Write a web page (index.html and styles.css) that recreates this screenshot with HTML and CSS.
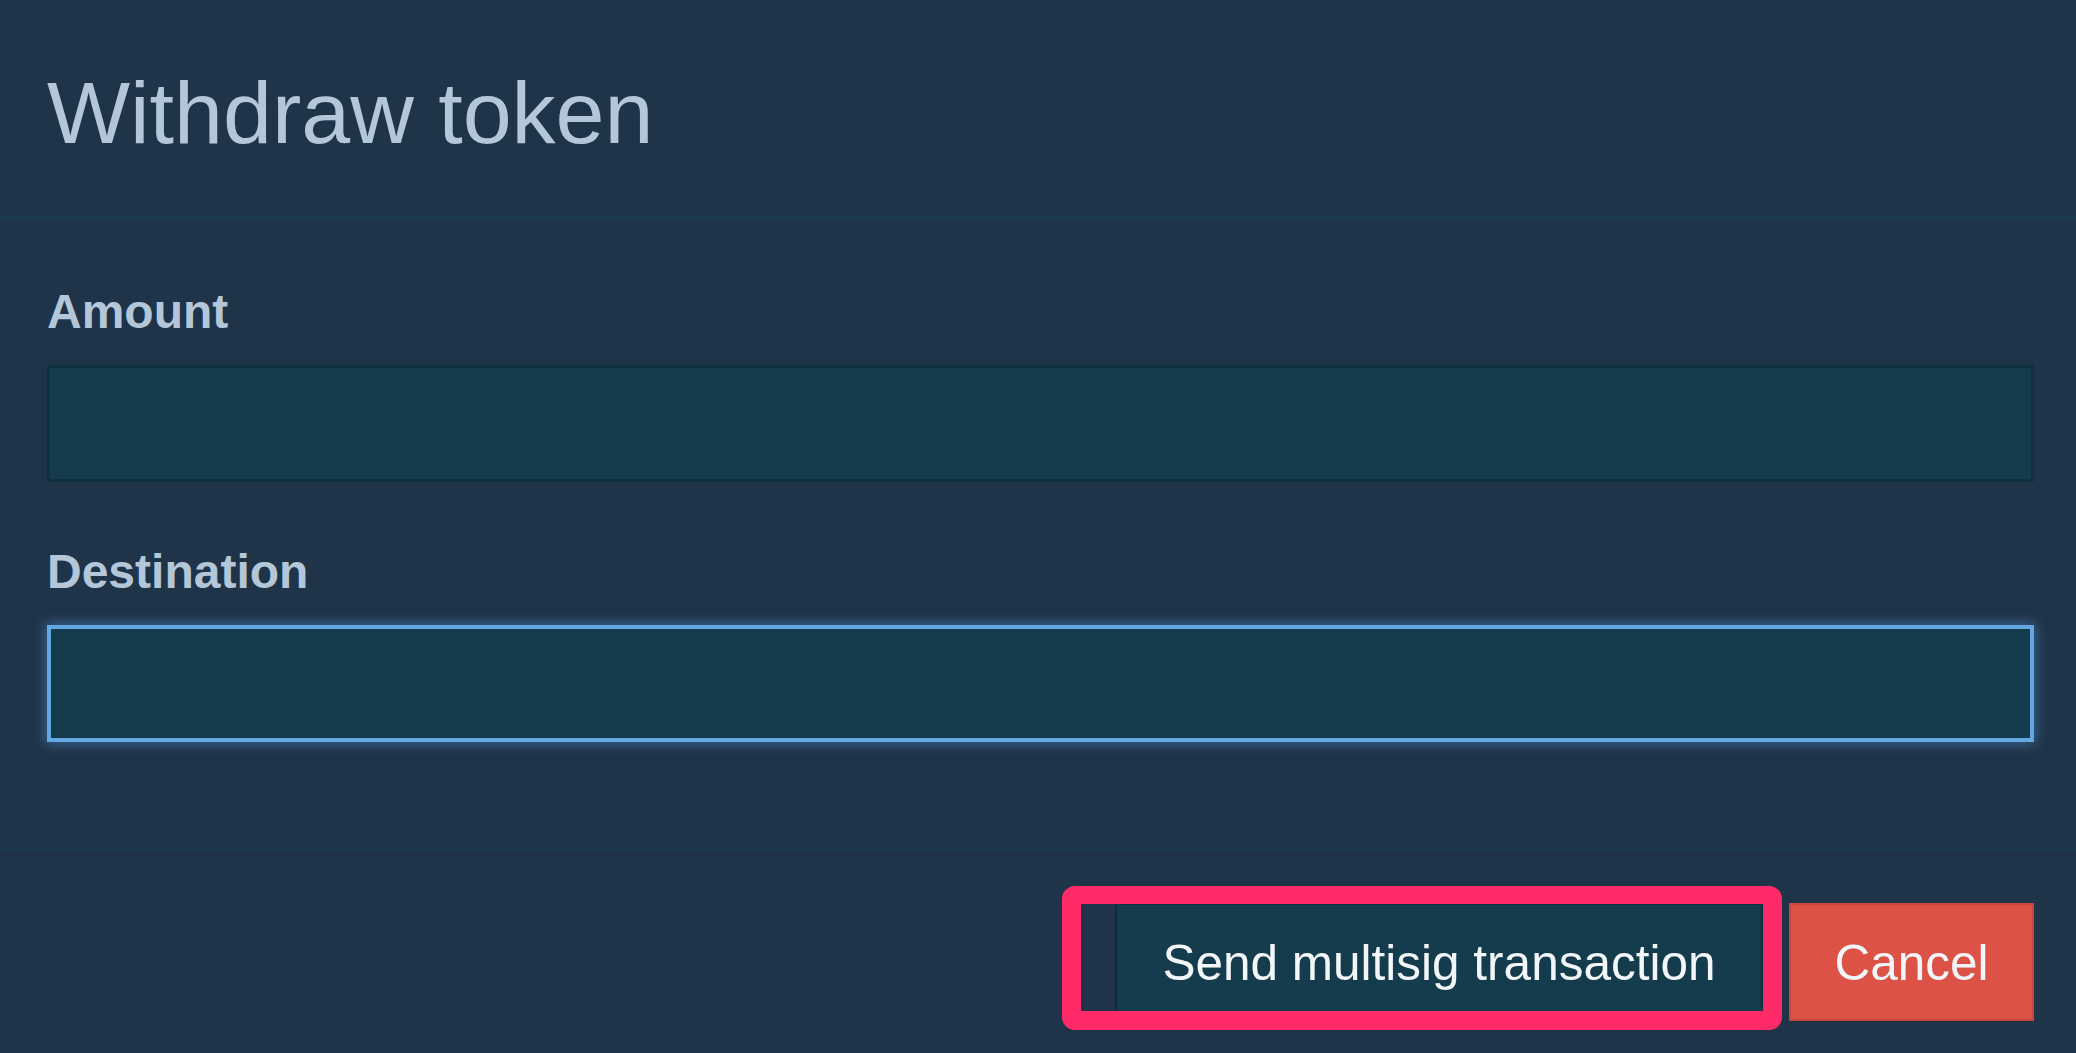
FILE: index.html
```html
<!DOCTYPE html>
<html lang="en">
<head>
<meta charset="utf-8">
<title>Withdraw token</title>
<link rel="stylesheet" href="styles.css">
</head>
<body>
<div class="modal">
  <header class="modal-header">
    <h1 class="modal-title">Withdraw token</h1>
  </header>
  <section class="modal-body">
    <div class="field">
      <label class="field-label" for="amount">Amount</label>
      <input class="field-input" id="amount" type="text">
    </div>
    <div class="field">
      <label class="field-label" for="destination">Destination</label>
      <input class="field-input is-focused" id="destination" type="text">
    </div>
  </section>
  <footer class="modal-footer">
    <div class="btn-wrap">
      <button class="btn btn-send" type="button">Send multisig transaction</button>
      <span class="highlight"></span>
    </div>
    <button class="btn btn-cancel" type="button">Cancel</button>
  </footer>
</div>
</body>
</html>
```

FILE: styles.css
```css
html, body {
  margin: 0;
  padding: 0;
  background: #1f3349;
}

body {
  font-family: "Liberation Sans", Arial, Helvetica, sans-serif;
  width: 2076px;
  height: 1053px;
  overflow: hidden;
}

.modal {
  display: flex;
  flex-direction: column;
  height: 1053px;
}

.modal-header {
  padding: 62px 42px 53px 47px;
  border-bottom: 3px solid #1a3b4b;
}

.modal-title {
  margin: 0;
  font-size: 88px;
  font-weight: 400;
  line-height: 101px;
  color: #b3c7d8;
}

.modal-body {
  padding: 65px 42px 0 47px;
  height: 631px;
  box-sizing: border-box;
  border-bottom: 3px solid #1a3b4b;
  flex-shrink: 0;
}

.field {
  display: flex;
  flex-direction: column;
}

.field + .field {
  margin-top: 62px;
}

.field-label {
  font-size: 48px;
  font-weight: 700;
  line-height: 55px;
  color: #b3c7d8;
  margin-bottom: 26px;
}

.field-input {
  display: block;
  box-sizing: border-box;
  width: 100%;
  height: 117px;
  margin: 0;
  background: #143c4c;
  border: 3px solid #10303f;
  outline: none;
  font: inherit;
}

.field-input.is-focused {
  border: 4px solid #63a8e2;
  box-shadow: 0 0 12px 2px rgba(90, 160, 225, 0.45);
}

.modal-footer {
  display: flex;
  justify-content: flex-end;
  align-items: flex-start;
  gap: 26px;
  padding: 53px 42px 0 47px;
}

.btn-wrap {
  position: relative;
  display: flex;
}

.btn {
  height: 118px;
  margin: 0;
  border: 0;
  font-family: "Liberation Sans", Arial, Helvetica, sans-serif;
  font-size: 49.5px;
  font-weight: 400;
  color: #f3f6f9;
  cursor: pointer;
}

.btn-send {
  width: 648px;
  background: #143c4c;
  border: 2px solid #10303f;
  border-left: 2px solid #0e2a38;
}

.btn-cancel {
  width: 245px;
  background: #dc5247;
  border: 2px solid #c9473d;
}

/* pink callout ring laid over the send button */
.highlight {
  position: absolute;
  left: -53px;
  right: -19px;
  top: -17px;
  bottom: -9px;
  border: 19px solid #fe2b68;
  border-top-width: 18px;
  border-bottom-width: 19px;
  border-radius: 13px;
  pointer-events: none;
}
```
